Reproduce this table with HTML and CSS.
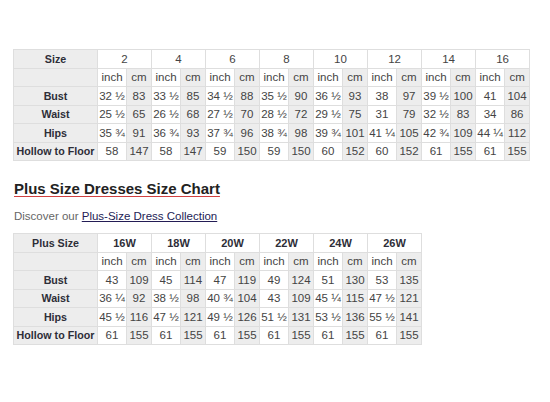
FILE: index.html
```html
<!DOCTYPE html>
<html lang="en">

<head>
    <meta charset="UTF-8">
    <meta name="viewport" content="width=device-width, initial-scale=1.0">
    <title>Size Chart</title>
    <link rel="stylesheet" href="styles.css">
</head>

<body>
    <div class="page">
        <!-- 標準尺寸 -->
        <table class="size-table regular">
            <colgroup>
                <col class="c-label">
                <col class="c-inch"><col class="c-cm">
                <col class="c-inch"><col class="c-cm">
                <col class="c-inch"><col class="c-cm">
                <col class="c-inch"><col class="c-cm">
                <col class="c-inch"><col class="c-cm">
                <col class="c-inch"><col class="c-cm">
                <col class="c-inch"><col class="c-cm">
                <col class="c-inch"><col class="c-cm">
            </colgroup>
            <tr>
                <th class="label">Size</th>
                <td colspan="2">2</td>
                <td colspan="2">4</td>
                <td colspan="2">6</td>
                <td colspan="2">8</td>
                <td colspan="2">10</td>
                <td colspan="2">12</td>
                <td colspan="2">14</td>
                <td colspan="2">16</td>
            </tr>
            <tr>
                <th class="label"></th>
                <td>inch</td><td class="cm">cm</td>
                <td>inch</td><td class="cm">cm</td>
                <td>inch</td><td class="cm">cm</td>
                <td>inch</td><td class="cm">cm</td>
                <td>inch</td><td class="cm">cm</td>
                <td>inch</td><td class="cm">cm</td>
                <td>inch</td><td class="cm">cm</td>
                <td>inch</td><td class="cm">cm</td>
            </tr>
            <tr>
                <th class="label">Bust</th>
                <td>32 ½</td><td class="cm">83</td>
                <td>33 ½</td><td class="cm">85</td>
                <td>34 ½</td><td class="cm">88</td>
                <td>35 ½</td><td class="cm">90</td>
                <td>36 ½</td><td class="cm">93</td>
                <td>38</td><td class="cm">97</td>
                <td>39 ½</td><td class="cm">100</td>
                <td>41</td><td class="cm">104</td>
            </tr>
            <tr>
                <th class="label">Waist</th>
                <td>25 ½</td><td class="cm">65</td>
                <td>26 ½</td><td class="cm">68</td>
                <td>27 ½</td><td class="cm">70</td>
                <td>28 ½</td><td class="cm">72</td>
                <td>29 ½</td><td class="cm">75</td>
                <td>31</td><td class="cm">79</td>
                <td>32 ½</td><td class="cm">83</td>
                <td>34</td><td class="cm">86</td>
            </tr>
            <tr>
                <th class="label">Hips</th>
                <td>35 ¾</td><td class="cm">91</td>
                <td>36 ¾</td><td class="cm">93</td>
                <td>37 ¾</td><td class="cm">96</td>
                <td>38 ¾</td><td class="cm">98</td>
                <td>39 ¾</td><td class="cm">101</td>
                <td>41 ¼</td><td class="cm">105</td>
                <td>42 ¾</td><td class="cm">109</td>
                <td>44 ¼</td><td class="cm">112</td>
            </tr>
            <tr>
                <th class="label">Hollow to Floor</th>
                <td>58</td><td class="cm">147</td>
                <td>58</td><td class="cm">147</td>
                <td>59</td><td class="cm">150</td>
                <td>59</td><td class="cm">150</td>
                <td>60</td><td class="cm">152</td>
                <td>60</td><td class="cm">152</td>
                <td>61</td><td class="cm">155</td>
                <td>61</td><td class="cm">155</td>
            </tr>
        </table>

        <!-- 大尺碼 -->
        <h2 class="chart-title">Plus Size Dresses Size Chart</h2>
        <p class="discover">Discover our <a href="#">Plus-Size Dress Collection</a></p>

        <table class="size-table plus">
            <colgroup>
                <col class="c-label">
                <col class="c-inch"><col class="c-cm">
                <col class="c-inch"><col class="c-cm">
                <col class="c-inch"><col class="c-cm">
                <col class="c-inch"><col class="c-cm">
                <col class="c-inch"><col class="c-cm">
                <col class="c-inch"><col class="c-cm">
            </colgroup>
            <tr>
                <th class="label">Plus Size</th>
                <th colspan="2">16W</th>
                <th colspan="2">18W</th>
                <th colspan="2">20W</th>
                <th colspan="2">22W</th>
                <th colspan="2">24W</th>
                <th colspan="2">26W</th>
            </tr>
            <tr>
                <th class="label"></th>
                <td>inch</td><td class="cm">cm</td>
                <td>inch</td><td class="cm">cm</td>
                <td>inch</td><td class="cm">cm</td>
                <td>inch</td><td class="cm">cm</td>
                <td>inch</td><td class="cm">cm</td>
                <td>inch</td><td class="cm">cm</td>
            </tr>
            <tr>
                <th class="label">Bust</th>
                <td>43</td><td class="cm">109</td>
                <td>45</td><td class="cm">114</td>
                <td>47</td><td class="cm">119</td>
                <td>49</td><td class="cm">124</td>
                <td>51</td><td class="cm">130</td>
                <td>53</td><td class="cm">135</td>
            </tr>
            <tr>
                <th class="label">Waist</th>
                <td>36 ¼</td><td class="cm">92</td>
                <td>38 ½</td><td class="cm">98</td>
                <td>40 ¾</td><td class="cm">104</td>
                <td>43</td><td class="cm">109</td>
                <td>45 ¼</td><td class="cm">115</td>
                <td>47 ½</td><td class="cm">121</td>
            </tr>
            <tr>
                <th class="label">Hips</th>
                <td>45 ½</td><td class="cm">116</td>
                <td>47 ½</td><td class="cm">121</td>
                <td>49 ½</td><td class="cm">126</td>
                <td>51 ½</td><td class="cm">131</td>
                <td>53 ½</td><td class="cm">136</td>
                <td>55 ½</td><td class="cm">141</td>
            </tr>
            <tr>
                <th class="label">Hollow to Floor</th>
                <td>61</td><td class="cm">155</td>
                <td>61</td><td class="cm">155</td>
                <td>61</td><td class="cm">155</td>
                <td>61</td><td class="cm">155</td>
                <td>61</td><td class="cm">155</td>
                <td>61</td><td class="cm">155</td>
            </tr>
        </table>
    </div>
</body>

</html>
```

FILE: styles.css
```css
* {
    box-sizing: border-box;
}

body {
    margin: 0;
    background-color: #fff;
    font-family: "Liberation Sans", Arial, Helvetica, sans-serif;
    color: #444;
}

.page {
    padding: 49px 13px 0;
}

/* 尺寸表格 */
.size-table {
    border-collapse: collapse;
    table-layout: fixed;
}

.size-table.regular {
    width: 516px;
}

.size-table.plus {
    width: 408px;
}

.c-label {
    width: 84px;
}

.c-inch {
    width: 29px;
}

.c-cm {
    width: 25px;
}

.size-table td,
.size-table th {
    border: 1px solid #dedede;
    padding: 1.5px 0;
    height: 18.5px;
    line-height: 14.5px;
    font-size: 11.5px;
    font-weight: normal;
    text-align: center;
    white-space: nowrap;
    background-color: #fff;
}

.size-table th {
    font-size: 11px;
    font-weight: bold;
    color: #2e2e38;
}

.size-table .label {
    font-size: 10.7px;
    background-color: #ededed;
}

.size-table .cm {
    background-color: #ededed;
}

/* 標題 */
.chart-title {
    margin: 19px 0 0 1px;
    font-size: 15px;
    line-height: 18px;
    color: #222;
    text-decoration: underline;
    text-decoration-color: #d04040;
    text-decoration-thickness: 1px;
    text-underline-offset: 2px;
}

.discover {
    margin: 11px 0 10px 1px;
    font-size: 11.5px;
    line-height: 14px;
    color: #666;
}

.discover a {
    color: #231c55;
}
```
